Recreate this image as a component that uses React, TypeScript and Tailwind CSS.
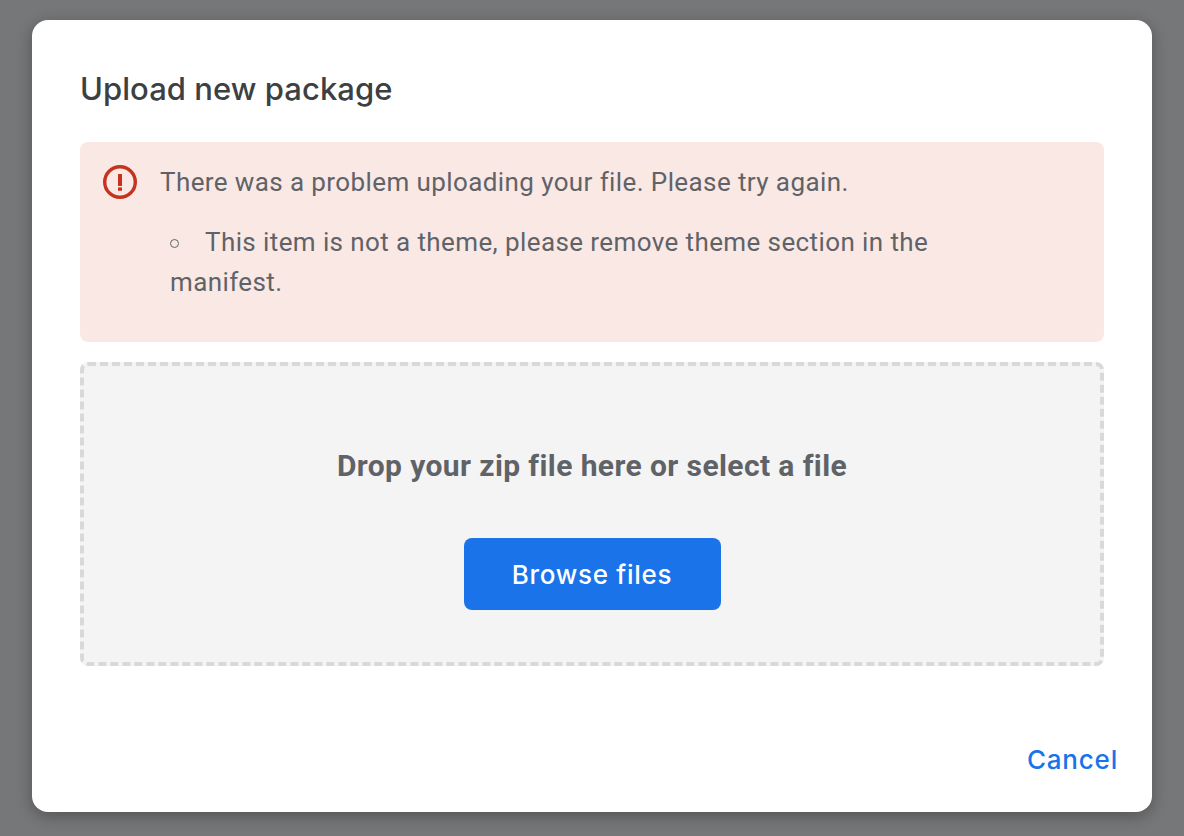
export default function App() {
  return (
    <div className="h-[836px] overflow-hidden bg-[#767779] pt-5 px-8 font-['Roboto',sans-serif]">
      <div className="h-[792px] rounded-2xl bg-white px-12 pt-[51px] flex flex-col shadow-[0_4px_16px_rgba(0,0,0,0.3)]">
        <h1 className="font-['Inter',sans-serif] font-medium text-[31px] leading-9 tracking-[0.05px] text-[#3c4043]">Upload new package</h1>
        <div className="mt-[35px] h-[200px] rounded-lg bg-[#fae8e5] pl-[22px] pt-[20px] pr-[170px] text-[26px] leading-10 tracking-[0.4px] text-[#5f6368]">
          <div className="flex items-center gap-[22px]">
            <svg width="36" height="36" viewBox="0 0 36 36" fill="none" className="shrink-0">
              <circle cx="18" cy="18" r="15.3" stroke="#c5331f" strokeWidth="3.4" />
              <rect x="16" y="10" width="4" height="12" fill="#c5331f" />
              <rect x="16" y="23.4" width="4" height="3.4" fill="#c5331f" />
            </svg>
            <span>There was a problem uploading your file. Please try again.</span>
          </div>
          <p className="mt-5 pl-[68px]">
            <span className="inline-block w-[9px] h-[9px] mr-[26px] rounded-full border border-[#5f6368] align-[3px]"></span>This item is not a theme, please remove theme section in the manifest.
          </p>
        </div>
        <div className="mt-5 h-[304px] rounded-lg border-4 border-dashed border-[#d9d9d9] bg-[#f4f4f4] flex flex-col items-center pt-[82px]">
          <p className="text-[30px] leading-9 font-bold tracking-[0.4px] text-[#5f6368]">Drop your zip file here or select a file</p>
          <button className="mt-[54px] w-[257px] h-[72px] rounded-lg bg-[#1a73e8] text-white font-['Inter',sans-serif] font-medium text-[26px] tracking-[0.7px]">Browse files</button>
        </div>
        <div className="mt-[74px] -mr-[14px] flex justify-end">
          <button className="font-['Inter',sans-serif] font-medium text-[26px] leading-10 tracking-[0.8px] text-[#1a73e8]">Cancel</button>
        </div>
      </div>
    </div>
  )
}
